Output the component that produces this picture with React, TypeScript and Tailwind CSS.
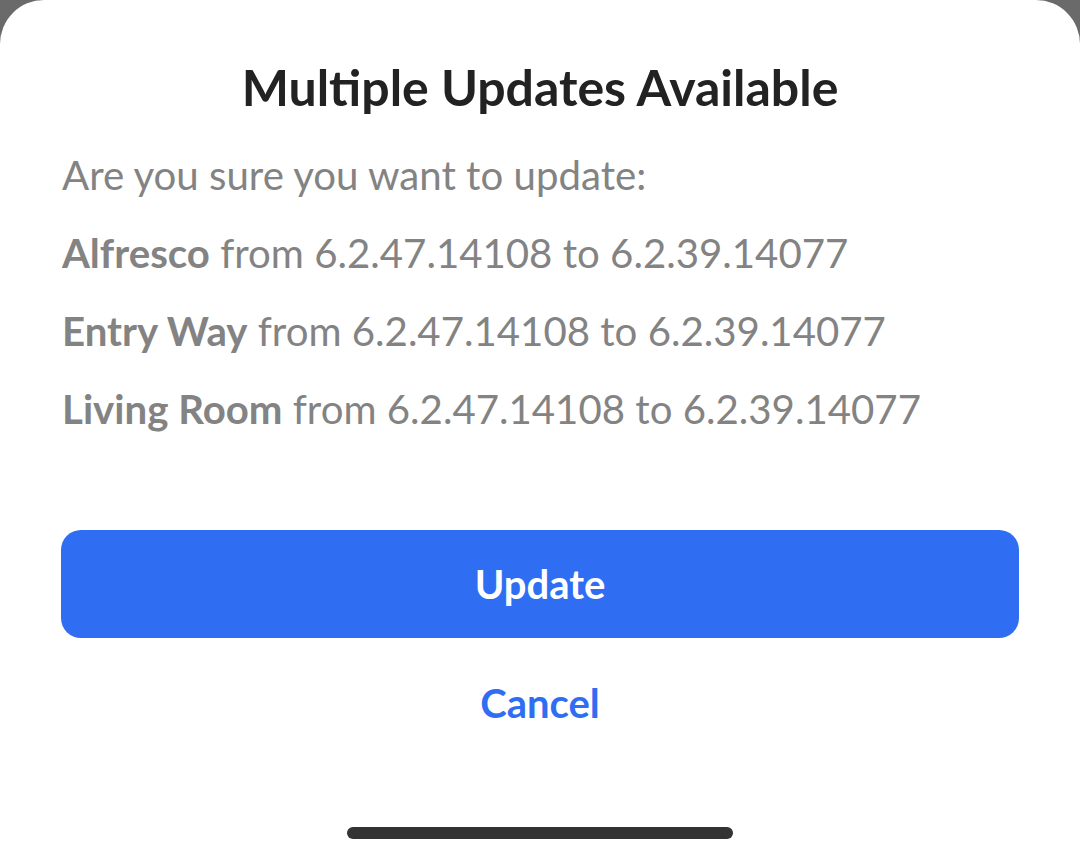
export default function App() {
    return (
        <div className="h-[860px] w-[1080px] overflow-hidden bg-[#6a6a6a]" style={{ fontFamily: 'Lato, "Open Sans", sans-serif' }}>
            <div className="flex h-full flex-col rounded-t-[44px] bg-white">
                <h1 className="mt-[57px] text-center text-[50px] leading-[60px] font-bold text-[#222222]">Multiple Updates Available</h1>

                <div className="mt-[33px] flex flex-col gap-[28px] px-[62px] text-[40.2px] leading-[50px] text-[#838383]">
                    <p>Are you sure you want to update:</p>
                    <p>
                        <span className="font-bold">Alfresco</span> from 6.2.47.14108 to 6.2.39.14077
                    </p>
                    <p>
                        <span className="font-bold">Entry Way</span> from 6.2.47.14108 to 6.2.39.14077
                    </p>
                    <p>
                        <span className="font-bold">Living Room</span> from 6.2.47.14108 to 6.2.39.14077
                    </p>
                </div>

                <div className="mt-[96px] px-[61px]">
                    <button className="flex h-[108px] w-full items-center justify-center rounded-[20px] bg-[#2f6ef3] text-[40px] font-bold text-white">
                        Update
                    </button>
                </div>

                <button className="mx-auto mt-[35px] text-[40px] leading-[60px] font-bold text-[#2f6ef3]">Cancel</button>

                <div className="mx-auto mt-auto mb-[21px] h-[12px] w-[386px] rounded-full bg-[#333333]" />
            </div>
        </div>
    );
}
